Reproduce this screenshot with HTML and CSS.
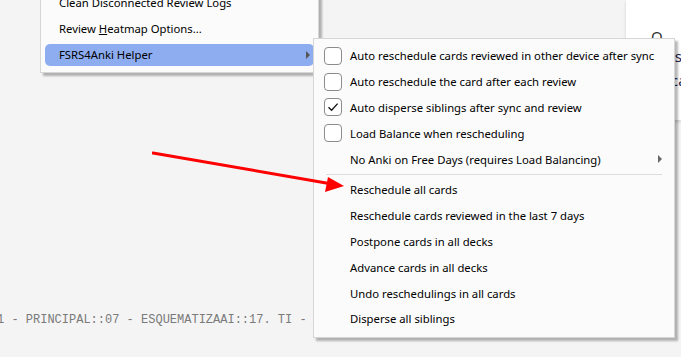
FILE: index.html
```html
<!DOCTYPE html>
<html>
<head>
<meta charset="utf-8">
<link rel="stylesheet" href="styles.css">
</head>
<body>
<div class="page">
  <div class="workspace">
    <div class="canvas">
      <div class="deckpath">1 - PRINCIPAL::07 - ESQUEMATIZAAI::17. TI - Gestão de Projetos::Fase de Execução e Controle</div>
    </div>
    <div class="sidepanel">
      <div class="side-o">O</div>
      <div class="side-line">is</div>
      <div class="side-line">ca</div>
    </div>
  </div>

  <div class="menu main-menu">
    <div class="item">Clean Disconnected Review Logs</div>
    <div class="item">Review <u>H</u>eatmap Options...</div>
    <div class="item active">FSRS4Anki Helper<span class="arrow"></span></div>
  </div>

  <div class="menu sub-menu">
    <div class="row"><span class="check"></span><span class="label">Auto reschedule cards reviewed in other device after sync</span></div>
    <div class="row"><span class="check"></span><span class="label">Auto reschedule the card after each review</span></div>
    <div class="row"><span class="check checked"><svg viewBox="0 0 18 18" width="18" height="18"><path d="M4.5 9.2 L7.6 12.3 L13.6 5.6" fill="none" stroke="#111" stroke-width="1.3"/></svg></span><span class="label">Auto disperse siblings after sync and review</span></div>
    <div class="row"><span class="check"></span><span class="label">Load Balance when rescheduling</span></div>
    <div class="row"><span class="nocheck"></span><span class="label">No Anki on Free Days (requires Load Balancing)</span><span class="arrow sub-arrow"></span></div>
    <div class="sep"></div>
    <div class="row"><span class="nocheck"></span><span class="label">Reschedule all cards</span></div>
    <div class="row"><span class="nocheck"></span><span class="label">Reschedule cards reviewed in the last 7 days</span></div>
    <div class="row"><span class="nocheck"></span><span class="label">Postpone cards in all decks</span></div>
    <div class="row"><span class="nocheck"></span><span class="label">Advance cards in all decks</span></div>
    <div class="row"><span class="nocheck"></span><span class="label">Undo reschedulings in all cards</span></div>
    <div class="row"><span class="nocheck"></span><span class="label">Disperse all siblings</span></div>
  </div>

  <svg class="annotation" width="200" height="45" viewBox="0 0 200 45">
    <line x1="1" y1="2" x2="180" y2="33" stroke="#f00" stroke-width="3" stroke-linecap="round"/>
    <polygon points="192,35 176,26 173,41" fill="#f00"/>
  </svg>
</div>
</body>
</html>
```

FILE: styles.css
```css
html, body {
  margin: 0;
  padding: 0;
}
body {
  background: #f4f4f4;
  font-family: "Noto Sans", "Open Sans", sans-serif;
  font-size: 11.3px;
  color: #000;
  overflow: hidden;
}
.page {
  position: relative;
  width: 681px;
  height: 357px;
  overflow: hidden;
}
.workspace {
  display: flex;
  height: 357px;
}
.canvas {
  flex: 1;
  min-width: 0;
  overflow: hidden;
  padding-top: 312px;
}
.deckpath {
  font-family: "Liberation Mono", monospace;
  font-size: 12px;
  color: #7a7a7a;
  white-space: nowrap;
  margin-left: -3px;
  line-height: 16px;
}
.sidepanel {
  width: 55px;
  height: 120px;
  background: #fff;
  box-shadow: 0 2px 3px rgba(0,0,0,0.15);
  overflow: hidden;
  padding-left: 25px;
  box-sizing: border-box;
}
.side-o {
  margin-top: 28px;
  font-size: 15px;
  color: #333;
  line-height: 16px;
}
.side-line {
  font-size: 15px;
  color: #1a2450;
  line-height: 24px;
  margin-left: 20px;
}
.menu {
  position: absolute;
  background: #fbfbfb;
  border: 1px solid #d6d6d6;
  box-shadow: 3px 3px 2px rgba(0,0,0,0.28);
  box-sizing: border-box;
}
.main-menu {
  left: 40px;
  top: -13px;
  width: 279px;
  padding: 4px 4px 6px 4px;
  display: flex;
  flex-direction: column;
  gap: 4px;
}
.item {
  position: relative;
  height: 22px;
  line-height: 22px;
  padding-left: 14px;
  border-radius: 5px;
  white-space: nowrap;
}
.item.active {
  background: #8eadf0;
}
.arrow {
  position: absolute;
  right: 4px;
  top: 7px;
  width: 0;
  height: 0;
  border-top: 4px solid transparent;
  border-bottom: 4px solid transparent;
  border-left: 4px solid #555;
}
.sub-menu {
  left: 313px;
  top: 38px;
  width: 362px;
  height: 300px;
  padding: 4px 4px 0 10px;
}
.row {
  position: relative;
  display: flex;
  align-items: center;
  height: 25.8px;
  white-space: nowrap;
}
.check {
  width: 18px;
  height: 18px;
  box-sizing: border-box;
  border: 1px solid #8c8c8c;
  border-radius: 4px;
  background: #fff;
  margin-right: 8px;
  flex: none;
}
.check svg {
  display: block;
  margin: -1px;
}
.nocheck {
  width: 18px;
  margin-right: 8px;
  flex: none;
}
.sub-arrow {
  right: 8px;
  top: 9px;
  border-left-color: #666;
}
.sep {
  height: 1px;
  background: #dcdcdc;
  margin: 2px 8px 2px 2px;
}
.annotation {
  position: absolute;
  left: 152px;
  top: 151px;
}
```
